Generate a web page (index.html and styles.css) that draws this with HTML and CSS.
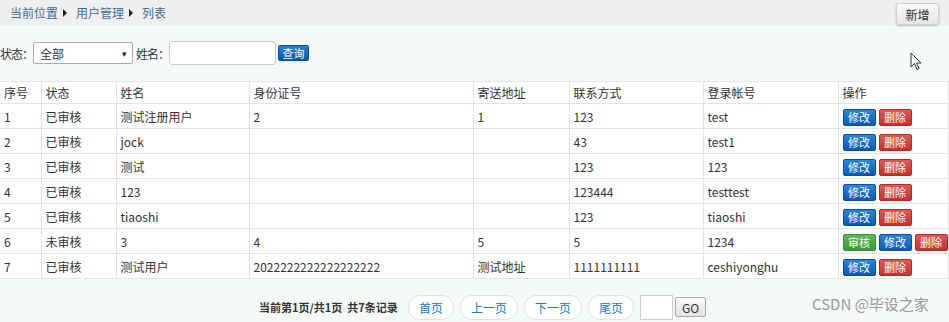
FILE: index.html
```html
<!DOCTYPE html>
<html lang="zh">
<head>
<meta charset="utf-8">
<link rel="stylesheet" href="styles.css">
</head>
<body>
<div class="topbar">
  <div class="crumbs">当前位置<span class="arr"></span>用户管理<span class="arr"></span>列表</div>
  <button class="btn-add">新增</button>
</div>
<div class="search">
  <span class="lbl">状态：</span>
  <div class="select"><span>全部</span><span class="caret">&#9662;</span></div>
  <span class="lbl lbl2">姓名：</span>
  <div class="input"></div>
  <button class="btn-q">查询</button>
  <svg class="cursor" width="12" height="19" viewBox="0 0 12 19"><path d="M1 1 L1 15 L4.5 11.5 L7 17.5 L9 16.6 L6.6 11 L11 11 Z" fill="#fff" stroke="#333" stroke-width="1"/></svg>
</div>
<table class="grid">
  <colgroup>
    <col style="width:41px"><col style="width:75px"><col style="width:133px"><col style="width:224px"><col style="width:96px"><col style="width:134px"><col style="width:135px"><col>
  </colgroup>
  <thead>
    <tr><th>序号</th><th>状态</th><th>姓名</th><th>身份证号</th><th>寄送地址</th><th>联系方式</th><th>登录帐号</th><th>操作</th></tr>
  </thead>
  <tbody>
    <tr><td>1</td><td>已审核</td><td>测试注册用户</td><td>2</td><td>1</td><td>123</td><td>test</td><td><span class="b blue">修改</span><span class="b red">删除</span></td></tr>
    <tr><td>2</td><td>已审核</td><td>jock</td><td></td><td></td><td>43</td><td>test1</td><td><span class="b blue">修改</span><span class="b red">删除</span></td></tr>
    <tr><td>3</td><td>已审核</td><td>测试</td><td></td><td></td><td>123</td><td>123</td><td><span class="b blue">修改</span><span class="b red">删除</span></td></tr>
    <tr><td>4</td><td>已审核</td><td>123</td><td></td><td></td><td>123444</td><td>testtest</td><td><span class="b blue">修改</span><span class="b red">删除</span></td></tr>
    <tr><td>5</td><td>已审核</td><td>tiaoshi</td><td></td><td></td><td>123</td><td>tiaoshi</td><td><span class="b blue">修改</span><span class="b red">删除</span></td></tr>
    <tr><td>6</td><td>未审核</td><td>3</td><td>4</td><td>5</td><td>5</td><td>1234</td><td><span class="b green">审核</span><span class="b blue">修改</span><span class="b red">删除</span></td></tr>
    <tr><td>7</td><td>已审核</td><td>测试用户</td><td>2022222222222222222</td><td>测试地址</td><td>1111111111</td><td>ceshiyonghu</td><td><span class="b blue">修改</span><span class="b red">删除</span></td></tr>
  </tbody>
</table>
<div class="pager">
  <span class="info">当前第1页/共1页&nbsp;&nbsp;共7条记录</span>
  <span class="pb">首页</span>
  <span class="pb">上一页</span>
  <span class="pb">下一页</span>
  <span class="pb">尾页</span>
  <span class="pinput"></span>
  <button class="go">GO</button>
  <span class="mark">CSDN @毕设之家</span>
</div>
</body>
</html>
```

FILE: styles.css
```css
html, body {
  margin: 0;
  padding: 0;
}
body {
  width: 949px;
  height: 322px;
  overflow: hidden;
  background: #f6faf6;
  font-family: "Noto Sans CJK SC", "Noto Sans", sans-serif;
  font-size: 12px;
  color: #333;
}
.topbar {
  height: 25px;
  background: #efefef;
  display: flex;
  align-items: center;
  justify-content: space-between;
  padding: 0 10px;
}
.crumbs {
  color: #3d6d99;
  font-size: 12px;
  line-height: 25px;
  display: flex;
  align-items: center;
}
.arr {
  width: 0;
  height: 0;
  border-top: 4px solid transparent;
  border-bottom: 4px solid transparent;
  border-left: 4px solid #222;
  margin: 0 9px 0 5px;
}
.btn-add {
  width: 43px;
  height: 22px;
  margin-top: 3px;
  font-family: inherit;
  font-size: 12px;
  color: #333;
  background: linear-gradient(#fafafa, #e6e6e6);
  border: 1px solid #cfcfcf;
  border-radius: 3px;
  box-shadow: 0 1px 2px rgba(0,0,0,0.25);
  padding: 0;
}
.search {
  height: 56px;
  display: flex;
  align-items: center;
  position: relative;
}
.lbl {
  width: 33px;
  color: #333;
  white-space: nowrap;
  letter-spacing: -1px;
}
.lbl2 {
  margin-left: 3px;
}
.select {
  height: 20px;
  width: 92px;
  border: 1px solid #aaa;
  border-radius: 2px;
  background: #fff;
  display: flex;
  align-items: center;
  justify-content: space-between;
  padding: 0 0 0 6px;
}
.caret {
  font-size: 9px;
  margin-right: 5px;
  color: #222;
}
.input {
  width: 105px;
  height: 22px;
  border: 1px solid #ccc;
  border-radius: 3px;
  background: #fff;
}
.btn-q {
  margin-left: 2px;
  width: 31px;
  height: 16px;
  padding: 0;
  font-family: inherit;
  font-size: 11px;
  color: #fff;
  border: 1px solid #0a4fa8;
  border-radius: 2px;
  background: linear-gradient(#2b80d8, #0b56b4);
  line-height: 14px;
}
.cursor {
  position: absolute;
  left: 910px;
  top: 27px;
}
.grid {
  width: 949px;
  border-collapse: collapse;
  table-layout: fixed;
  background: #fff;
}
.grid th, .grid td {
  border: 1px solid #e3e3e3;
  padding: 0 0 0 4px;
  text-align: left;
  font-weight: normal;
  white-space: nowrap;
  overflow: hidden;
  color: #333;
}
.grid th {
  height: 21px;
}
.grid td {
  height: 24px;
}
.grid th:first-child, .grid td:first-child {
  border-left: none;
}
.b {
  display: inline-block;
  width: 31px;
  height: 15px;
  line-height: 15px;
  text-align: center;
  color: #fff;
  font-size: 11px;
  border-radius: 2px;
  margin-right: 3px;
  vertical-align: middle;
}
.blue {
  background: linear-gradient(#2a86dc, #0b58b6);
  border: 1px solid #0a4fa0;
}
.red {
  background: linear-gradient(#e05a55, #c7302b);
  border: 1px solid #b52a26;
}
.green {
  background: linear-gradient(#5cb85c, #3d9b3d);
  border: 1px solid #3a8f3a;
}
.pager {
  height: 56px;
  display: flex;
  align-items: center;
  padding-left: 259px;
  position: relative;
}
.info {
  font-weight: bold;
  font-size: 11px;
  color: #333;
  width: 149px;
  white-space: nowrap;
}
.pb {
  display: inline-flex;
  align-items: center;
  justify-content: center;
  height: 23px;
  padding: 0 10px;
  border: 1px solid #e1e1e1;
  border-radius: 12px;
  background: #fff;
  color: #2a74c4;
  margin-right: 6px;
}
.pinput {
  width: 31px;
  height: 23px;
  border: 1px solid #ccc;
  background: #fff;
}
.go {
  margin-left: 2px;
  width: 31px;
  height: 20px;
  padding: 0;
  font-family: inherit;
  font-size: 12px;
  color: #333;
  border: 1px solid #aaa;
  border-radius: 2px;
  background: linear-gradient(#fafafa, #e3e3e3);
}
.mark {
  position: absolute;
  left: 812px;
  top: 14px;
  font-size: 15px;
  color: #999;
  font-family: "Noto Sans CJK SC", sans-serif;
}
```
